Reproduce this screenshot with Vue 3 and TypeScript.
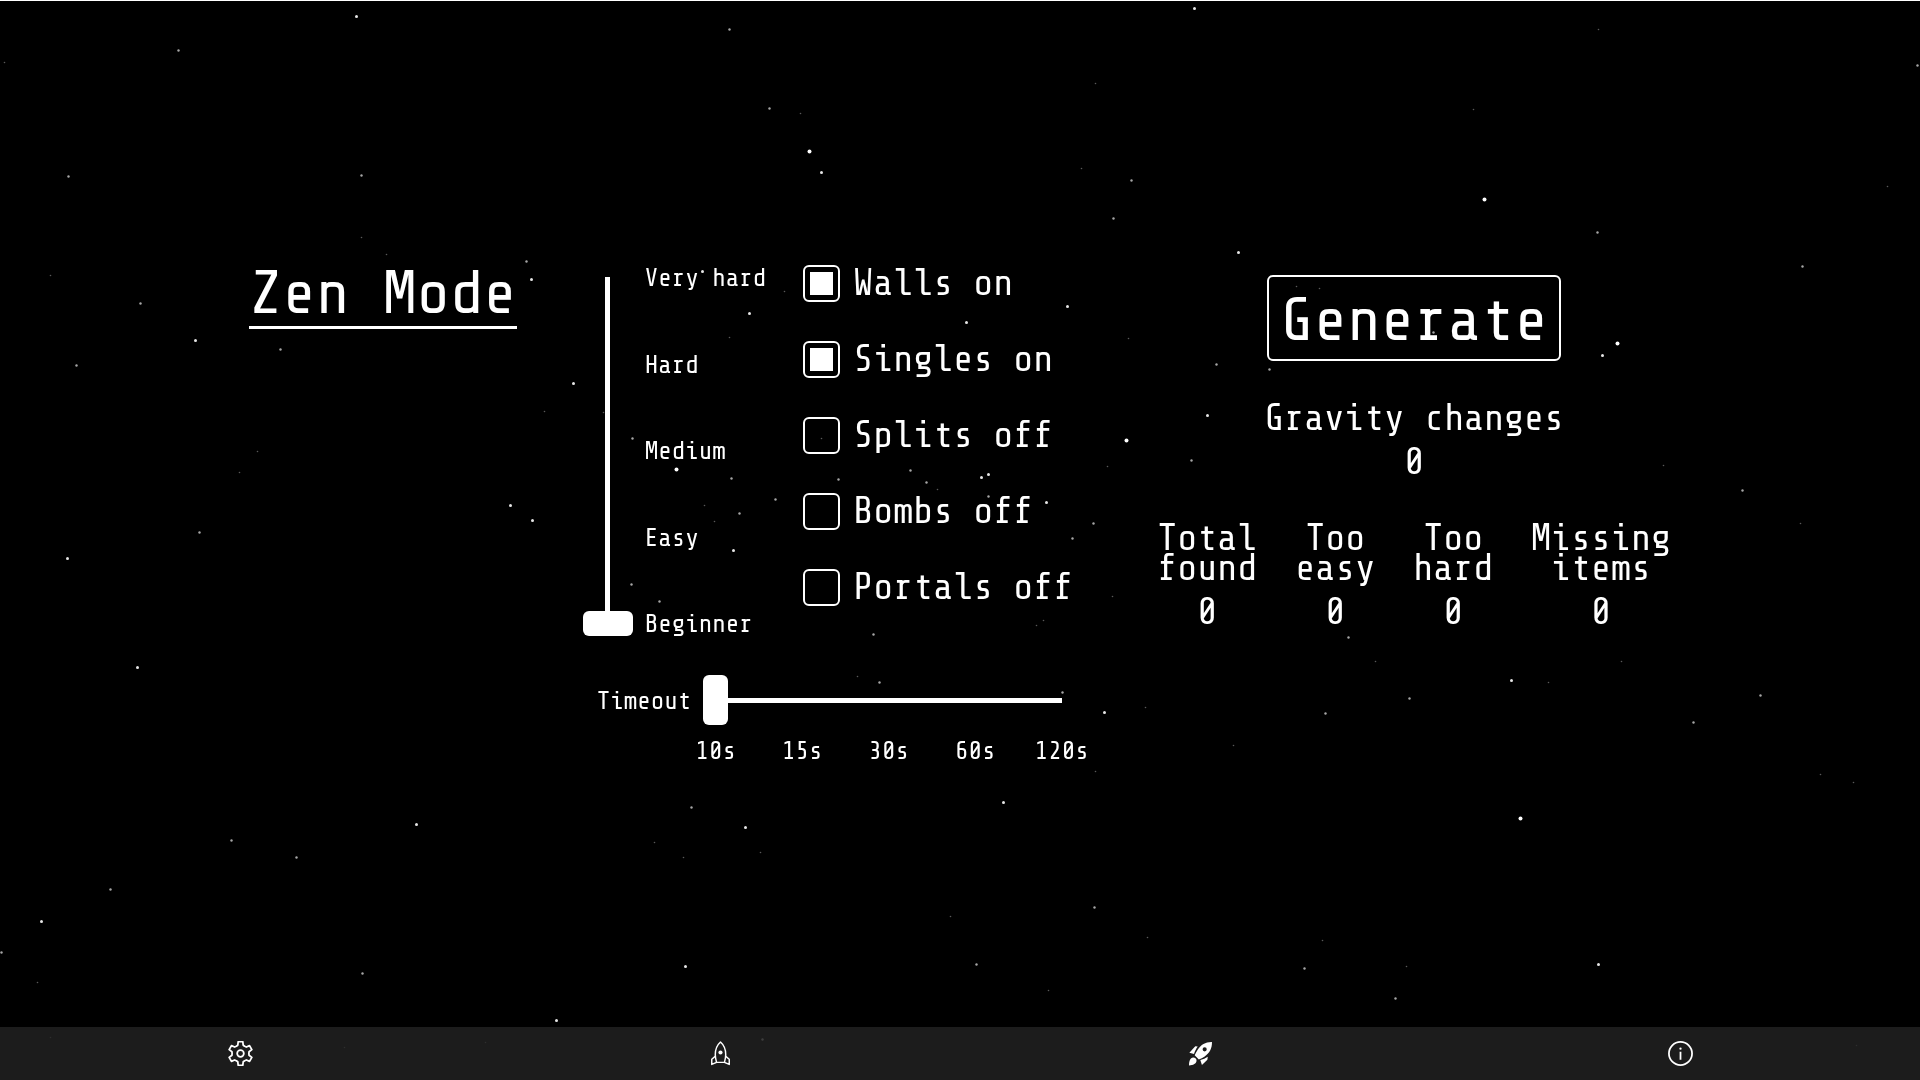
<script setup lang="ts">
import { reactive, ref } from 'vue'

type Star = [x: number, y: number, level: number]

// Radius and opacity for each brightness level of a star.
const levels = [
  { r: 0.8, o: 0.35 },
  { r: 1.2, o: 0.65 },
  { r: 1.5, o: 0.9 },
  { r: 2, o: 1 },
]

const stars: Star[] = [
  [356, 16, 2], [729, 29, 1], [178, 50, 1], [4, 62, 0], [769, 108, 1], [800, 113, 0], [809, 151, 3], [821, 172, 2],
  [68, 176, 1], [361, 175, 1], [361, 237, 0], [386, 254, 0], [526, 261, 1], [531, 279, 2], [50, 275, 0], [140, 303, 1],
  [195, 340, 2], [280, 349, 1], [76, 365, 1], [573, 383, 2], [544, 411, 0], [603, 412, 0], [257, 451, 0], [239, 472, 0],
  [632, 438, 1], [676, 469, 3], [731, 478, 1], [739, 513, 1], [510, 505, 2], [532, 520, 2], [199, 532, 1], [702, 271, 2],
  [749, 313, 2], [775, 499, 1], [838, 479, 1], [910, 470, 1], [926, 482, 1], [937, 489, 0], [704, 505, 0], [714, 521, 0],
  [784, 291, 0], [729, 337, 0], [821, 438, 0],
  [1194, 8, 2], [1598, 29, 0], [1917, 65, 1], [1095, 83, 0], [1473, 109, 0], [1081, 168, 0], [1131, 180, 1],
  [1113, 218, 1], [1484, 199, 3], [1597, 232, 1], [1887, 186, 0], [1238, 252, 2], [1802, 266, 1], [1067, 306, 2],
  [966, 322, 2], [1128, 338, 0], [1296, 286, 0], [1319, 288, 0], [1216, 364, 1], [1269, 369, 1], [1617, 343, 3],
  [1602, 355, 2], [1207, 415, 2], [1126, 440, 3], [1191, 460, 1], [1107, 466, 0], [988, 474, 2], [981, 477, 2],
  [988, 496, 1], [1046, 502, 2], [1093, 523, 1], [1072, 538, 1], [1742, 490, 1], [1663, 465, 0], [1800, 523, 0],
  [1433, 332, 1], [67, 558, 2], [733, 550, 2], [631, 584, 1], [659, 601, 1], [1112, 596, 0], [137, 667, 2],
  [873, 634, 1], [1043, 620, 0], [1036, 625, 0], [1348, 637, 1], [1375, 661, 0], [1621, 661, 0], [1511, 680, 2],
  [1548, 682, 0], [1760, 695, 1], [1409, 698, 1], [1325, 713, 1], [1104, 712, 2], [1145, 707, 0], [1062, 692, 1],
  [857, 676, 0], [879, 682, 1], [1693, 722, 1], [1233, 745, 0], [1095, 771, 0], [1820, 774, 0], [1853, 782, 0],
  [1003, 802, 2], [691, 807, 1], [745, 827, 2], [416, 824, 2], [1520, 818, 3], [231, 840, 1], [654, 842, 0],
  [760, 852, 0], [296, 857, 1], [683, 857, 0], [110, 889, 1], [41, 921, 2], [1, 952, 1], [1094, 907, 1], [950, 916, 0],
  [1147, 937, 0], [1322, 940, 0], [362, 973, 1], [37, 982, 0], [685, 966, 2], [976, 964, 1], [1304, 968, 1],
  [1406, 966, 0], [1598, 964, 2], [1048, 990, 0], [1395, 998, 1], [556, 1020, 2], [762, 1039, 1], [485, 1042, 0],
  [344, 1047, 0], [50, 1037, 0], [1856, 1045, 0],
]

const difficulties = ['Very hard', 'Hard', 'Medium', 'Easy', 'Beginner']
const timeouts = ['10s', '15s', '30s', '60s', '120s']
const difficulty = ref(0)
const timeout = ref(0)

const features = reactive([
  { name: 'Walls', on: true },
  { name: 'Singles', on: true },
  { name: 'Splits', on: false },
  { name: 'Bombs', on: false },
  { name: 'Portals', on: false },
])

const gravityChanges = ref(0)
const stats = reactive([
  { words: ['Total', 'found'], value: 0 },
  { words: ['Too', 'easy'], value: 0 },
  { words: ['Too', 'hard'], value: 0 },
  { words: ['Missing', 'items'], value: 0 },
])

// Outline of the six-toothed gear, one tooth turned in steps of 60 degrees.
const tooth = [[-4, -7], [-2.6, -8], [-2.2, -11.3], [2.2, -11.3], [2.6, -8], [4, -7]]
const gearPoints = Array.from({ length: 6 }, (_, i) => {
  const a = (i * Math.PI) / 3
  return tooth
    .map(([x, y]) => `${(x * Math.cos(a) - y * Math.sin(a)).toFixed(2)},${(x * Math.sin(a) + y * Math.cos(a)).toFixed(2)}`)
    .join(' ')
}).join(' ')
</script>

<template>
  <div class="page">
    <svg class="sky" viewBox="0 0 1920 1080" preserveAspectRatio="xMidYMid slice" aria-hidden="true">
      <circle
        v-for="([x, y, level], i) in stars"
        :key="i"
        :cx="x + 0.5"
        :cy="y + 0.5"
        :r="levels[level].r"
        :opacity="levels[level].o"
        fill="#fff"
      />
    </svg>

    <main class="content">
      <h1 class="title">Zen Mode</h1>

      <section class="options">
        <div class="top">
          <div class="difficulty">
            <input
              v-model.number="difficulty"
              class="slider vertical"
              type="range"
              min="0"
              max="4"
              aria-label="Difficulty"
            />
            <div class="levels">
              <span v-for="d in difficulties" :key="d">{{ d }}</span>
            </div>
          </div>
          <div class="features">
            <label v-for="f in features" :key="f.name" class="feature">
              <input v-model="f.on" type="checkbox" class="check" />
              <span>{{ f.name }} {{ f.on ? 'on' : 'off' }}</span>
            </label>
          </div>
        </div>

        <div class="timeout">
          <label for="timeout">Timeout</label>
          <input id="timeout" v-model.number="timeout" class="slider horizontal" type="range" min="0" max="4" />
          <div class="ticks">
            <span v-for="t in timeouts" :key="t">{{ t }}</span>
          </div>
        </div>
      </section>

      <section class="results">
        <button type="button" class="generate">Generate</button>
        <dl class="stat">
          <dt>Gravity changes</dt>
          <dd>{{ gravityChanges }}</dd>
        </dl>
        <div class="stats">
          <dl v-for="s in stats" :key="s.words.join(' ')" class="stat">
            <dt><span v-for="w in s.words" :key="w">{{ w }}</span></dt>
            <dd>{{ s.value }}</dd>
          </dl>
        </div>
      </section>
    </main>

    <nav class="tabs">
      <a href="#settings" aria-label="Settings">
        <svg viewBox="-12 -12 24 24" fill="none" stroke="#fff" stroke-width="1.7" stroke-linejoin="round">
          <polygon :points="gearPoints" />
          <circle r="3.2" />
        </svg>
      </a>
      <a href="#play" aria-label="Play">
        <svg viewBox="0 0 24 24" fill="none" stroke="#fff" stroke-width="1.4" stroke-linejoin="round">
          <path d="M12 1C8.600 4 7 9 7 13c0 3 .6 5.500 1.200 7.500h7.600c.6-2 1.200-4.500 1.200-7.500 0-4-1.600-9-5-12z" />
          <path d="M7.200 14.500L3.600 17.500v5l4.600-2M16.800 14.500l3.600 3v5l-4.600-2" />
          <circle cx="12" cy="11" r="2" fill="#fff" stroke="none" />
        </svg>
      </a>
      <a href="#zen" aria-label="Zen mode">
        <svg viewBox="0 0 24 24" fill="#fff">
          <path
            fill-rule="evenodd"
            d="M23 1C17 .8 12.500 3.500 9.300 8.300c-1.100 1.700-2.200 3.500-2.900 5.400l4 4c2-.7 3.700-1.600 5.300-2.700C20.600 12 23.200 7 23 1zM16 6a2 2 0 1 1 0 4 2 2 0 0 1 0-4z"
          />
          <path d="M9.300 5.200L7 5 1.300 11.200 5.800 12.400C6.500 10 7.700 7.500 9.300 5.200z" />
          <path d="M19 15l-.4 3-5.200 5-1.600-4.700c2.600-.7 5-1.800 7.200-3.300z" />
          <path d="M1 23.500c0-4 1-7.300 4-7.700 2 0 3.400 1.300 3.200 3.200C8 21.700 5 23.400 1 23.500z" />
        </svg>
      </a>
      <a href="#about" aria-label="About">
        <svg viewBox="0 0 24 24" fill="none" stroke="#fff" stroke-width="1.700">
          <circle cx="12" cy="12" r="11.100" />
          <path d="M12 10.300v7.700" />
          <circle cx="12" cy="7.400" r="1.100" fill="#fff" stroke="none" />
        </svg>
      </a>
    </nav>
  </div>
</template>

<style>
body {
  margin: 0;
  background: #000;
}
</style>

<style scoped>
.page {
  box-sizing: border-box;
  min-height: 100vh;
  display: flex;
  flex-direction: column;
  border-top: 1px solid #fff;
  color: #fff;
  font-family: 'Share Tech Mono', 'DejaVu Sans Mono', monospace;
  font-size: 37px;
  white-space: nowrap;
}

.sky {
  position: fixed;
  inset: 0;
  width: 100%;
  height: 100%;
  pointer-events: none;
}

.content {
  position: relative;
  flex: 1;
  display: flex;
  flex-wrap: wrap;
  justify-content: center;
  align-content: center;
  align-items: flex-start;
  gap: 66px;
}

.title {
  margin: 0;
  padding-bottom: 4px;
  font-size: 62px;
  font-weight: 400;
  line-height: 58px;
  border-bottom: 3px solid #fff;
}

.options {
  padding: 1px 17px 0 0;
  font-size: 25px;
  line-height: 25px;
}

.top {
  display: flex;
  gap: 37px;
  margin-bottom: 39px;
}

.difficulty {
  display: flex;
  gap: 12px;
}

.levels {
  display: flex;
  flex-direction: column;
  justify-content: space-between;
  margin: 1px 0 -1px;
}

.slider {
  appearance: none;
  margin: 0;
  border-radius: 6px;
  background: linear-gradient(#fff, #fff) center no-repeat;
}

.slider::-webkit-slider-thumb {
  appearance: none;
  border-radius: 6px;
  background: #fff;
}

.vertical {
  writing-mode: vertical-lr;
  direction: rtl;
  width: 50px;
  height: 371px;
  background-size: 5px calc(100% - 24px);
}

.vertical::-webkit-slider-thumb {
  width: 50px;
  height: 25px;
}

.horizontal {
  width: 371px;
  height: 50px;
  background-size: calc(100% - 24px) 5px;
}

.horizontal::-webkit-slider-thumb {
  width: 25px;
  height: 50px;
}

.features {
  display: flex;
  flex-direction: column;
  gap: 39px;
  font-size: 37px;
  line-height: 37px;
}

.feature {
  display: flex;
  align-items: center;
  gap: 13px;
}

.check {
  appearance: none;
  box-sizing: border-box;
  width: 37px;
  height: 37px;
  margin: 0;
  padding: 5px;
  border: 2px solid #fff;
  border-radius: 6px;
}

.check:checked {
  background: #fff content-box;
}

.timeout {
  display: grid;
  grid-template-columns: auto auto;
  justify-content: start;
  align-items: center;
  gap: 14px 12px;
  padding-left: 14px;
}

.timeout label {
  padding-top: 2px;
}

.ticks {
  grid-column: 2;
  display: flex;
  justify-content: space-between;
}

.ticks span {
  display: flex;
  justify-content: center;
  width: 25px;
}

.results {
  display: flex;
  flex-direction: column;
  align-items: center;
  padding-top: 11px;
}

.generate {
  padding: 4px 11px 0;
  border: 2px solid #fff;
  border-radius: 6px;
  background: none;
  color: inherit;
  font: inherit;
  font-size: 62px;
  line-height: 78px;
  margin-bottom: 42px;
}

.stat {
  margin: 0;
  line-height: 30px;
  text-align: center;
}

.stat dt span {
  display: block;
}

.stat dd {
  margin: 14px 0 0;
}

.stats {
  display: flex;
  gap: 38px;
  margin-top: 46px;
}

.tabs {
  position: relative;
  display: flex;
  height: 53px;
  background: rgba(35, 35, 35, 0.8);
}

.tabs a {
  flex: 1;
  display: flex;
  justify-content: center;
  align-items: center;
}

.tabs svg {
  width: 25px;
  height: 25px;
}
</style>
